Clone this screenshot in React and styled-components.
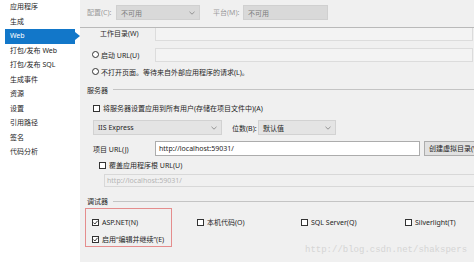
import React from "react";
import styled, { createGlobalStyle } from "styled-components";

const Global = createGlobalStyle`
  html, body { margin: 0; padding: 0; background: #f0f0f0; }
  body { font-family: "Noto Sans", "Noto Sans CJK SC", sans-serif; }
  * { box-sizing: border-box; }
`;

const Frame = styled.div`
  display: flex;
  width: 474px;
  height: 262px;
  overflow: hidden;
  font-size: 7px;
  color: #1e1e1e;
`;

const Sidebar = styled.nav`
  width: 80px;
  flex: none;
  background: #ffffff;
  display: flex;
  flex-direction: column;
`;

const NavItem = styled.div`
  position: relative;
  height: 14.5px;
  line-height: 14.5px;
  white-space: nowrap;
  margin-left: 5px;
  width: 70px;
  padding-left: 5px;
  background: ${(p) => (p.$active ? "#1277c9" : "transparent")};
  color: ${(p) => (p.$active ? "#ffffff" : "#1e1e1e")};
  &::after {
    content: "";
    display: ${(p) => (p.$active ? "block" : "none")};
    position: absolute;
    right: -5px;
    top: 3.25px;
    border-left: 5px solid #1277c9;
    border-top: 4px solid transparent;
    border-bottom: 4px solid transparent;
  }
`;

const Main = styled.main`
  position: relative;
  flex: 1;
  min-width: 0;
  background: #f0f0f0;
  display: flex;
  flex-direction: column;
  overflow: hidden;
`;

const TopBar = styled.div`
  height: 28px;
  flex: none;
  display: flex;
  align-items: flex-start;
  padding: 5px 0 0 7px;
  border-bottom: 1px solid #b9b9b9;
`;

const DimLabel = styled.span`
  color: #9b9b9b;
  line-height: 15px;
  white-space: nowrap;
  width: ${(p) => p.$w}px;
  flex: none;
`;

const Select = styled.div`
  width: ${(p) => p.$w}px;
  height: 15px;
  flex: none;
  display: flex;
  align-items: center;
  justify-content: space-between;
  padding: 0 4px 0 4px;
  margin-right: ${(p) => p.$mr || 0}px;
  background: ${(p) => (p.$disabled ? "#d9d9d9" : "#e4e4e4")};
  border: 1px solid ${(p) => (p.$disabled ? "#d0d0d0" : "#d2d2d2")};
  color: ${(p) => (p.$disabled ? "#7c7c7c" : "#1e1e1e")};
  white-space: nowrap;
`;

const Chevron = () => (
  <svg width="6" height="4" viewBox="0 0 6 4">
    <path d="M0.5 0.8 L3 3.2 L5.5 0.8" fill="none" stroke="#8a8a8a" strokeWidth="0.9" />
  </svg>
);

const Content = styled.div`
  display: flex;
  flex-direction: column;
  padding-left: 7px;
`;

const ClipRow = styled.div`
  height: 13px;
  flex: none;
  display: flex;
  align-items: flex-end;
  overflow: hidden;
`;

const ClippedLabel = styled.span`
  width: 68px;
  flex: none;
  padding-left: 13px;
  line-height: 7px;
  margin-bottom: 4px;
  color: #2a2a2a;
  white-space: nowrap;
`;

const Row = styled.div`
  height: ${(p) => p.$h || 14}px;
  margin-top: ${(p) => p.$mt || 0}px;
  padding-left: ${(p) => p.$indent || 0}px;
  flex: none;
  display: flex;
  align-items: center;
  white-space: nowrap;
`;

const FieldLabel = styled.span`
  width: ${(p) => p.$w}px;
  flex: none;
  color: ${(p) => p.$color || "#1e1e1e"};
  white-space: nowrap;
`;

const DimBox = styled.div`
  width: 318px;
  height: ${(p) => p.$h || 14}px;
  flex: none;
  background: #f3f3f3;
  border: 1px solid #dcdcdc;
`;

const Radio = styled.span`
  width: 7px;
  height: 7px;
  flex: none;
  border-radius: 50%;
  border: 1px solid #333333;
  background: #ffffff;
  margin-right: 2px;
`;

const Box = styled.span`
  width: 7px;
  height: 7px;
  flex: none;
  border: 1px solid #333333;
  background: #ffffff;
  margin-right: 3px;
  display: flex;
  align-items: center;
  justify-content: center;
`;

const CheckWrap = styled.label`
  display: flex;
  align-items: center;
  white-space: nowrap;
`;

const Check = ({ checked, children }) => (
  <CheckWrap>
    <Box>
      {checked && (
        <svg width="5" height="5" viewBox="0 0 5 5">
          <path d="M0.4 2.5 L1.9 4 L4.6 0.8" fill="none" stroke="#222" strokeWidth="0.9" />
        </svg>
      )}
    </Box>
    <span>{children}</span>
  </CheckWrap>
);

const SectionHeader = styled.div`
  height: ${(p) => p.$h || 10}px;
  margin-top: ${(p) => p.$mt || 0}px;
  flex: none;
  display: flex;
  align-items: center;
  white-space: nowrap;
  &::after {
    content: "";
    flex: 1;
    margin-left: 5px;
    border-top: 1px solid #c4c4c4;
  }
`;

const UrlInput = styled.div`
  width: 265px;
  height: 15px;
  flex: none;
  background: #ffffff;
  border: 1px solid #acacac;
  padding-left: 3px;
  line-height: 13px;
  color: #1e1e1e;
`;

const Button = styled.div`
  margin-left: 4px;
  width: 70px;
  height: 15px;
  flex: none;
  background: #e1e1e1;
  border: 1px solid #adadad;
  padding-left: 4px;
  line-height: 13px;
  color: #1e1e1e;
  white-space: nowrap;
`;

const DisabledInput = styled.div`
  margin-top: 2px;
  margin-left: 17px;
  width: 380px;
  height: 13px;
  flex: none;
  background: #f0f0f0;
  border: 1px solid #d8d8d8;
  padding-left: 2px;
  line-height: 11px;
  color: #b4b4b4;
`;

const DebugArea = styled.div`
  margin-top: 2px;
  display: flex;
  align-items: flex-start;
`;

const Highlight = styled.div`
  width: 87px;
  height: 39px;
  flex: none;
  margin-left: -2px;
  border: 1px solid #e58d8d;
  padding: 6px 0 0 6px;
  display: flex;
  flex-direction: column;
  gap: 3px;
`;

const CheckCell = styled.div`
  height: 14px;
  display: flex;
  align-items: center;
  width: ${(p) => p.$w || 104}px;
  margin-left: ${(p) => p.$ml || 0}px;
  margin-top: ${(p) => p.$mt || 0}px;
  flex: none;
`;

const Watermark = styled.div`
  position: absolute;
  left: 225px;
  top: 245px;
  font-family: "Liberation Mono", monospace;
  font-size: 9px;
  color: #d5d5d5;
  white-space: nowrap;
`;

const navItems = [
  "应用程序",
  "生成",
  "Web",
  "打包/发布 Web",
  "打包/发布 SQL",
  "生成事件",
  "资源",
  "设置",
  "引用路径",
  "签名",
  "代码分析",
];

export default function App() {
  return (
    <>
      <Global />
      <Frame>
        <Sidebar>
          {navItems.map((t) => (
            <NavItem key={t} $active={t === "Web"}>
              {t}
            </NavItem>
          ))}
        </Sidebar>
        <Main>
          <TopBar>
            <DimLabel $w={29}>配置(C):</DimLabel>
            <Select $w={84} $mr={13} $disabled>
              <span>不可用</span>
              <Chevron />
            </Select>
            <DimLabel $w={30}>平台(M):</DimLabel>
            <Select $w={85} $disabled>
              <span>不可用</span>
            </Select>
          </TopBar>
          <Content>
            <ClipRow>
              <ClippedLabel>工作目录(W)</ClippedLabel>
              <DimBox $h={16} />
            </ClipRow>
            <Row $mt={6} $h={15} $indent={5}>
              <Radio />
              <FieldLabel $w={54}>启动 URL(U)</FieldLabel>
              <DimBox $h={14} />
            </Row>
            <Row $mt={2} $h={15} $indent={5}>
              <Radio />
              <span>不打开页面。等待来自外部应用程序的请求(L)。</span>
            </Row>
            <SectionHeader $mt={5} $h={11}>服务器</SectionHeader>
            <Row $mt={6} $indent={6}>
              <Check>将服务器设置应用到所有用户(存储在项目文件中)(A)</Check>
            </Row>
            <Row $mt={5} $h={15} $indent={6}>
              <Select $w={129} $mr={10}>
                <span>IIS Express</span>
                <Chevron />
              </Select>
              <FieldLabel $w={26}>位数(B):</FieldLabel>
              <Select $w={78}>
                <span>默认值</span>
                <Chevron />
              </Select>
            </Row>
            <Row $mt={6} $h={15} $indent={6}>
              <FieldLabel $w={62}>项目 URL(J)</FieldLabel>
              <UrlInput>http://localhost:59031/</UrlInput>
              <Button>创建虚拟目录(V)</Button>
            </Row>
            <Row $mt={2} $indent={12}>
              <Check>覆盖应用程序根 URL(U)</Check>
            </Row>
            <DisabledInput>http://localhost:59031/</DisabledInput>
            <SectionHeader $mt={9}>调试器</SectionHeader>
            <DebugArea>
              <Highlight>
                <CheckCell $w={80}>
                  <Check checked>ASP.NET(N)</Check>
                </CheckCell>
                <CheckCell $w={80}>
                  <Check checked>启用“编辑并继续”(E)</Check>
                </CheckCell>
              </Highlight>
              <CheckCell $ml={25} $mt={7}>
                <Check>本机代码(O)</Check>
              </CheckCell>
              <CheckCell $mt={7}>
                <Check>SQL Server(Q)</Check>
              </CheckCell>
              <CheckCell $mt={7}>
                <Check>Silverlight(T)</Check>
              </CheckCell>
            </DebugArea>
          </Content>
          <Watermark>http://blog.csdn.net/shakspers</Watermark>
        </Main>
      </Frame>
    </>
  );
}
